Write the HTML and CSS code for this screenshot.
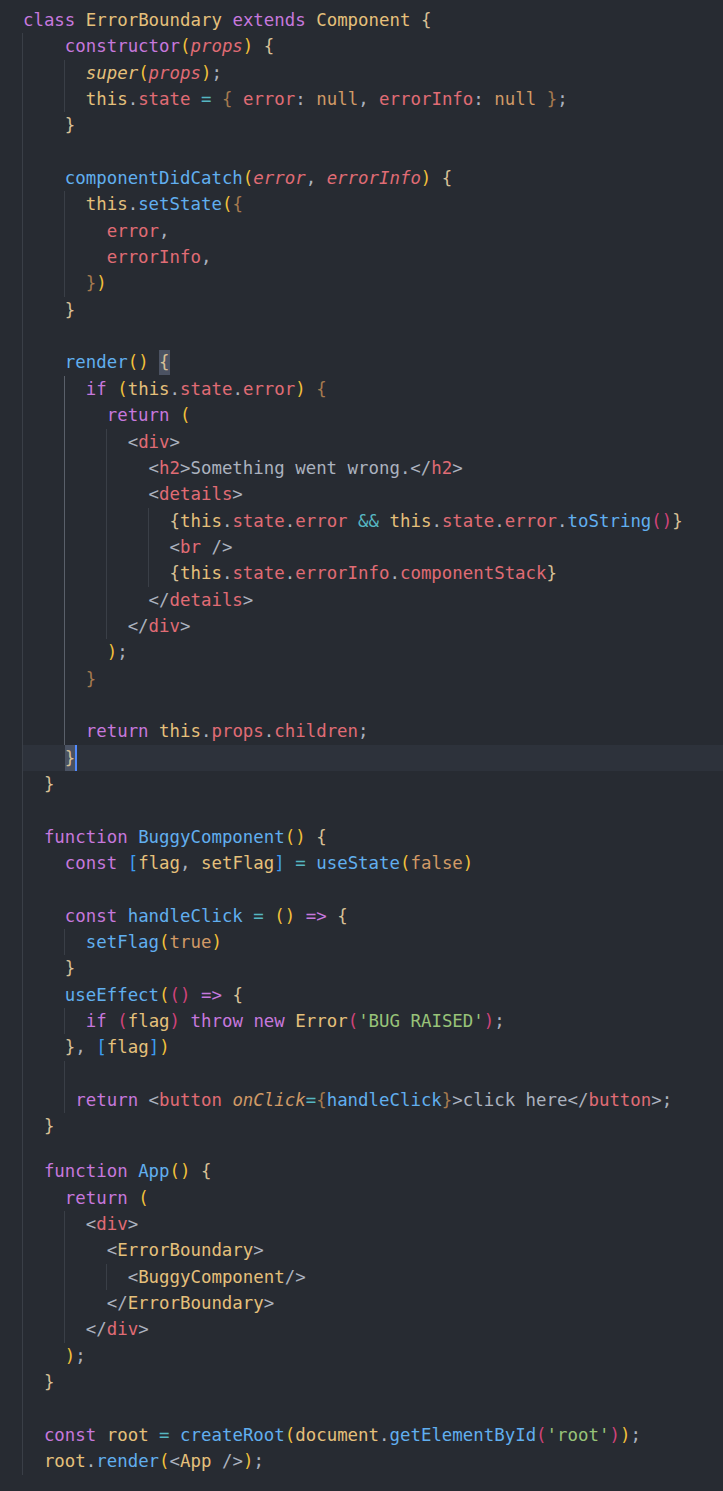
FILE: index.html
```html
<!DOCTYPE html>
<html lang="en">
<head>
<meta charset="utf-8">
<title>ErrorBoundary</title>
<link rel="stylesheet" href="styles.css">
</head>
<body>
<main class="editor">
<div class="ln">  <span class="k">class</span> <span class="t">ErrorBoundary</span> <span class="k">extends</span> <span class="t">Component</span> <span class="bc">{</span></div>
<div class="ln g2">      <span class="k">constructor</span><span class="b1">(</span><span class="v i">props</span><span class="b1">)</span> <span class="bc">{</span></div>
<div class="ln g2 g6">        <span class="t i">super</span><span class="b1">(</span><span class="v i">props</span><span class="b1">)</span>;</div>
<div class="ln g2 g6">        <span class="t">this</span>.<span class="v">state</span> <span class="o">=</span> <span class="bb">{</span> <span class="v">error</span>: <span class="n">null</span>, <span class="v">errorInfo</span>: <span class="n">null</span> <span class="bb">}</span>;</div>
<div class="ln g2">      <span class="bc">}</span></div>
<div class="ln g2"></div>
<div class="ln g2">      <span class="f">componentDidCatch</span><span class="b1">(</span><span class="v i">error</span>, <span class="v i">errorInfo</span><span class="b1">)</span> <span class="bc">{</span></div>
<div class="ln g2 g6">        <span class="t">this</span>.<span class="f">setState</span><span class="b1">(</span><span class="bb">{</span></div>
<div class="ln g2 g6">          <span class="v">error</span>,</div>
<div class="ln g2 g6">          <span class="v">errorInfo</span>,</div>
<div class="ln g2 g6">        <span class="bb">}</span><span class="b1">)</span></div>
<div class="ln g2">      <span class="bc">}</span></div>
<div class="ln g2"></div>
<div class="ln g2">      <span class="f">render</span><span class="b1">()</span> <span class="bc mt">{</span></div>
<div class="ln g2 g6a">        <span class="k">if</span> <span class="b1">(</span><span class="t">this</span>.<span class="v">state</span>.<span class="v">error</span><span class="b1">)</span> <span class="bb">{</span></div>
<div class="ln g2 g6a">          <span class="k">return</span> <span class="b1">(</span></div>
<div class="ln g2 g6a g10">            &lt;<span class="v">div</span>&gt;</div>
<div class="ln g2 g6a g10">              &lt;<span class="v">h2</span>&gt;Something went wrong.&lt;/<span class="v">h2</span>&gt;</div>
<div class="ln g2 g6a g10">              &lt;<span class="v">details</span>&gt;</div>
<div class="ln g2 g6a g10 g14">                <span class="bc">{</span><span class="t">this</span>.<span class="v">state</span>.<span class="v">error</span> <span class="o">&amp;&amp;</span> <span class="t">this</span>.<span class="v">state</span>.<span class="v">error</span>.<span class="f">toString</span><span class="b2">()</span><span class="bc">}</span></div>
<div class="ln g2 g6a g10 g14">                &lt;<span class="v">br</span> /&gt;</div>
<div class="ln g2 g6a g10 g14">                <span class="bc">{</span><span class="t">this</span>.<span class="v">state</span>.<span class="v">errorInfo</span>.<span class="v">componentStack</span><span class="bc">}</span></div>
<div class="ln g2 g6a g10">              &lt;/<span class="v">details</span>&gt;</div>
<div class="ln g2 g6a g10">            &lt;/<span class="v">div</span>&gt;</div>
<div class="ln g2 g6a">          <span class="b1">)</span>;</div>
<div class="ln g2 g6a">        <span class="bb">}</span></div>
<div class="ln g2 g6a"></div>
<div class="ln g2 g6a">        <span class="k">return</span> <span class="t">this</span>.<span class="v">props</span>.<span class="v">children</span>;</div>
<div class="ln g2 hl">      <span class="bc sel">}</span><span class="cur"></span></div>
<div class="ln g2">    <span class="bc">}</span></div>
<div class="ln g2"></div>
<div class="ln g2">    <span class="k">function</span> <span class="f">BuggyComponent</span><span class="b1">()</span> <span class="bc">{</span></div>
<div class="ln g2">      <span class="k">const</span> <span class="bs">[</span><span class="t">flag</span>, <span class="t">setFlag</span><span class="bs">]</span> <span class="o">=</span> <span class="f">useState</span><span class="b1">(</span><span class="n">false</span><span class="b1">)</span></div>
<div class="ln g2"></div>
<div class="ln g2">      <span class="k">const</span> <span class="f">handleClick</span> <span class="o">=</span> <span class="b1">()</span> <span class="k">=&gt;</span> <span class="bc">{</span></div>
<div class="ln g2 g6">        <span class="f">setFlag</span><span class="b1">(</span><span class="n">true</span><span class="b1">)</span></div>
<div class="ln g2">      <span class="bc">}</span></div>
<div class="ln g2">      <span class="f">useEffect</span><span class="b1">(</span><span class="b2">()</span> <span class="k">=&gt;</span> <span class="bc">{</span></div>
<div class="ln g2 g6">        <span class="k">if</span> <span class="b2">(</span><span class="t">flag</span><span class="b2">)</span> <span class="k">throw</span> <span class="k">new</span> <span class="t">Error</span><span class="b2">(</span><span class="s">'BUG RAISED'</span><span class="b2">)</span>;</div>
<div class="ln g2">      <span class="bc">}</span>, <span class="bs">[</span><span class="t">flag</span><span class="bs">]</span><span class="b1">)</span></div>
<div class="ln g2 g6"></div>
<div class="ln g2 g6">       <span class="k">return</span> &lt;<span class="v">button</span> <span class="n i">onClick</span><span class="o">=</span><span class="bb">{</span><span class="f">handleClick</span><span class="bb">}</span>&gt;click here&lt;/<span class="v">button</span>&gt;;</div>
<div class="ln g2">    <span class="bc">}</span></div>
<div class="ln g2 gap"></div>
<div class="ln g2">    <span class="k">function</span> <span class="f">App</span><span class="b1">()</span> <span class="bc">{</span></div>
<div class="ln g2">      <span class="k">return</span> <span class="b1">(</span></div>
<div class="ln g2 g6">        &lt;<span class="v">div</span>&gt;</div>
<div class="ln g2 g6">          &lt;<span class="t">ErrorBoundary</span>&gt;</div>
<div class="ln g2 g6 g10">            &lt;<span class="t">BuggyComponent</span>/&gt;</div>
<div class="ln g2 g6">          &lt;/<span class="t">ErrorBoundary</span>&gt;</div>
<div class="ln g2 g6">        &lt;/<span class="v">div</span>&gt;</div>
<div class="ln g2">      <span class="b1">)</span>;</div>
<div class="ln g2">    <span class="bc">}</span></div>
<div class="ln g2"></div>
<div class="ln g2">    <span class="k">const</span> <span class="t">root</span> <span class="o">=</span> <span class="f">createRoot</span><span class="b1">(</span><span class="t">document</span>.<span class="f">getElementById</span><span class="b2">(</span><span class="s">'root'</span><span class="b2">)</span><span class="b1">)</span>;</div>
<div class="ln g2">    <span class="t">root</span>.<span class="f">render</span><span class="b1">(</span>&lt;<span class="t">App</span> /&gt;<span class="b1">)</span>;</div>
</main>
</body>
</html>
```
FILE: styles.css
```css
html, body {
  margin: 0;
  padding: 0;
  background: #272b32;
}

.editor {
  display: block;
  box-sizing: border-box;
  min-height: 1491px;
  padding-top: 7px;
  font-family: "DejaVu Sans Mono", "Liberation Mono", monospace;
  font-size: 17.4px;
  color: #abb2bf;
}

.ln {
  --g2: transparent;
  --g6: transparent;
  --g10: transparent;
  --g14: transparent;
  --hl: transparent;
  box-sizing: border-box;
  height: 26.35px;
  line-height: 26.35px;
  padding-left: 2px;
  white-space: pre;
  background-image:
    linear-gradient(var(--g2), var(--g2)),
    linear-gradient(var(--g6), var(--g6)),
    linear-gradient(var(--g10), var(--g10)),
    linear-gradient(var(--g14), var(--g14)),
    linear-gradient(var(--hl), var(--hl));
  background-repeat: no-repeat;
  background-size: 1px 100%, 1px 100%, 1px 100%, 1px 100%, 100% 100%;
  background-position: 22px 0, 64px 0, 106px 0, 148px 0, 23px 0;
}

.g2 { --g2: #3a3f47; }
.g6 { --g6: #3a3f47; }
.g6a { --g6: #5a606a; }
.g10 { --g10: #3a3f47; }
.g14 { --g14: #3a3f47; }
.hl { --hl: #2d323b; }

.gap { height: 18.6px; }

.k { color: #c678dd; }
.t { color: #e5c07b; }
.f { color: #61afef; }
.v { color: #e06c75; }
.n { color: #d19a66; }
.s { color: #98c379; }
.o { color: #56b6c2; }
.i { font-style: italic; }
.b1 { color: #f2c13a; }
.b2 { color: #d0437a; }
.bc { color: #d8c096; }
.bb { color: #a57a4f; }
.bs { color: #3d9df0; }

.mt {
  display: inline-block;
  height: 25px;
  line-height: 25px;
  background: #4b5262;
}

.sel {
  display: inline-block;
  height: 26.35px;
  background: #4a5262;
}

.cur {
  display: inline-block;
  width: 2px;
  height: 26px;
  vertical-align: top;
  background: #528bff;
}
```
